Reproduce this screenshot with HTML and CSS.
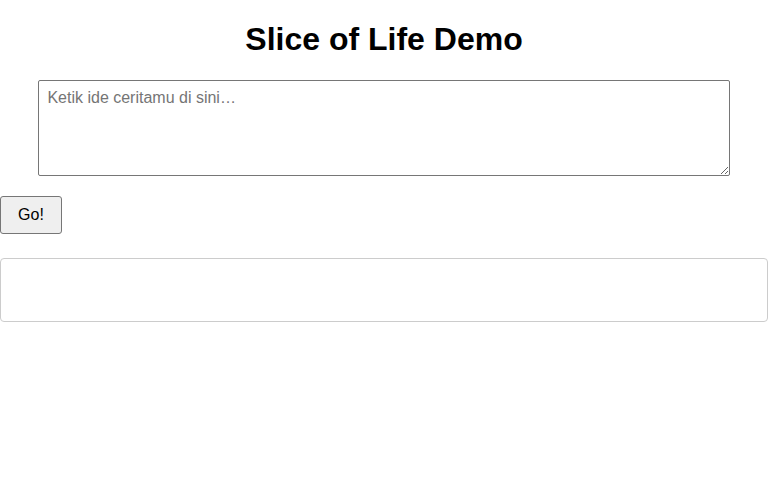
FILE: index.html
```html
<!DOCTYPE html>
<html lang="id">
<head>
    <meta charset="UTF-8">
    <meta name="viewport" content="width=device-width, initial-scale=1.0">
    <title>Slice of Life Demo</title>
    <link rel="stylesheet" href="styles.css">
</head>
<body>
    <h1 class="title">Slice of Life Demo</h1>
    <textarea class="idea" id="idea" placeholder="Ketik ide ceritamu di sini…"></textarea>
    <button class="go-btn" id="go">Go!</button>
    <div class="output" id="output"></div>
</body>
</html>
```

FILE: styles.css
```css
body{
    margin: 0;
    font-family: "Liberation Sans", Arial, sans-serif;
    background: #fff;
    color: #000;
}
.title{
    text-align: center;
    font-size: 32px;
    margin: 21px 0 22px;
    line-height: 37px;
}
.idea{
    display: block;
    box-sizing: border-box;
    width: 90%;
    height: 96px;
    margin: 0 auto;
    padding: 8px 8px;
    font-family: "Liberation Sans", Arial, sans-serif;
    font-size: 16px;
    border: 1px solid #767676;
    border-radius: 2px;
}
.idea::placeholder{
    color: #757575;
}
.go-btn{
    display: block;
    margin-top: 20px;
    height: 38px;
    width: 62px;
    padding: 0;
    font-family: "Liberation Sans", Arial, sans-serif;
    font-size: 16px;
    background: #efefef;
    border: 1px solid #767676;
    border-radius: 3px;
    color: #000;
}
.output{
    margin-top: 24px;
    box-sizing: border-box;
    min-height: 64px;
    border: 1px solid #ccc;
    border-radius: 4px;
    padding: 16px;
}
```
